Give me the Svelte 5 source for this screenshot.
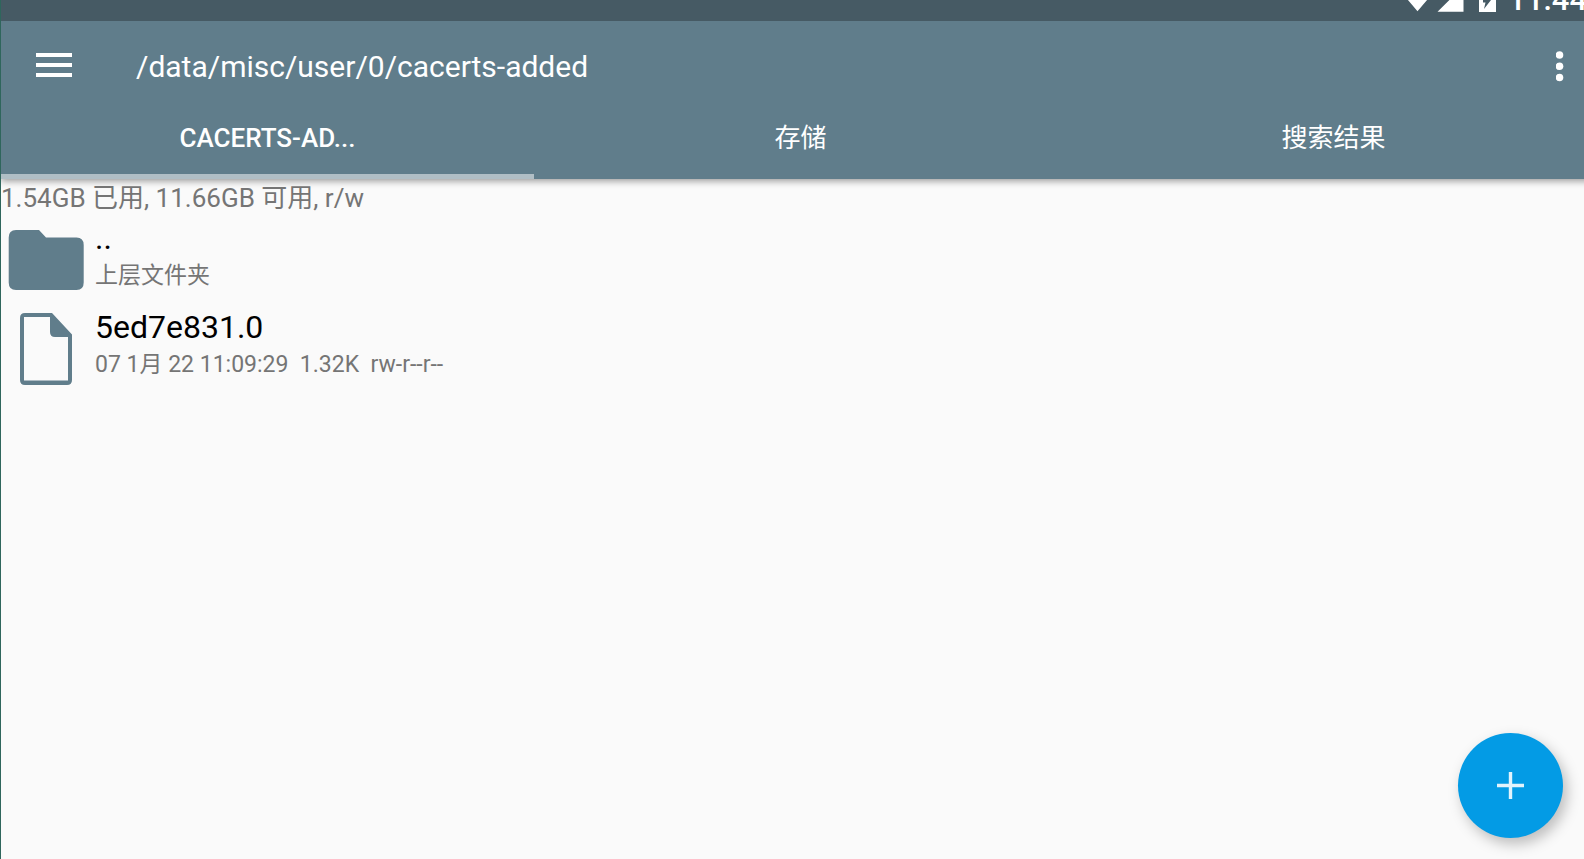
<script>
  const tabs = ['CACERTS-AD...', '存储', '搜索结果'];
  let active = $state(0);
</script>

<div class="window">
  <div class="screen">
    <header>
      <div class="status">
        <svg class="signals" viewBox="0 0 90 12" aria-hidden="true">
          <path fill="#fff" d="M-1.500 -10H34.500L16.500 11.300Z M36.500 11.800L62.500 -14V11.800Z M78 -12H95V12H78Z" />
          <path fill="#465a64" d="M83 9L84.500 2.500H82V-8H90V0Z" />
        </svg>
        <time>11:44</time>
      </div>
      <div class="toolbar">
        <button class="menu" aria-label="Menu">
          <svg width="36" height="26" viewBox="0 0 36 26"><path fill="#fff" d="M0 0h36v4H0zM0 10h36v4H0zM0 20h36v4H0z" /></svg>
        </button>
        <h1>/data/misc/user/0/cacerts-added</h1>
        <button class="more" aria-label="More options">
          <svg width="8" height="32" viewBox="0 0 8 32" fill="#fff"><circle cx="3.500" cy="5" r="3.800" /><circle cx="3.500" cy="16.300" r="3.800" /><circle cx="3.500" cy="27.500" r="3.800" /></svg>
        </button>
      </div>
      <nav>
        {#each tabs as tab, i}
          <button class="tab" class:active={active === i} onclick={() => (active = i)}>{tab}</button>
        {/each}
      </nav>
    </header>
    <main>
      <p class="usage">1.54GB 已用, 11.66GB 可用, r/w</p>
      <ul>
        <li class="parent">
          <svg class="folder" width="76" height="60" viewBox="0 0 76 60" aria-hidden="true">
            <path fill="#607d8b" d="M8 0H31L38 7.500H68.500Q75.700 7.500 75.700 15V52.500Q75.700 60 68.500 60H8Q.7 60 .7 52.500V7.500Q.7 0 8 0Z" />
          </svg>
          <div><span class="name">..</span><span class="detail">上层文件夹</span></div>
        </li>
        <li class="file">
          <svg width="52" height="72" viewBox="0 0 52 72" aria-hidden="true">
            <path fill="#607d8b" fill-rule="evenodd" d="M5 0H32L52 21.500V67Q52 72 47 72H5Q0 72 0 67V5Q0 0 5 0ZM4 4V67.500H48V24H35Q30 24 30 19V4Z" />
          </svg>
          <div><span class="name">5ed7e831.0</span><span class="detail">07 1月 22 11:09:29&nbsp; 1.32K&nbsp; rw-r--r--</span></div>
        </li>
      </ul>
    </main>
    <button class="fab" aria-label="Add">
      <svg width="27" height="27" viewBox="0 0 27 27"><path fill="#e1f3fc" d="M0 11.800h11.800V0h3.400v11.800H27v3.400H15.200V27h-3.400V15.200H0z" /></svg>
    </button>
  </div>
</div>

<style>
  :global(body) { margin: 0; }
  .window {
    box-sizing: border-box;
    min-height: 100vh;
    display: flex;
    overflow: hidden;
    border-left: 1px solid #2f665c;
    background: #fafafa;
    font-family: Roboto, "Noto Sans CJK SC", sans-serif;
  }
  .screen {
    position: relative;
    flex: 1;
    min-width: 0;
    margin-right: -16px;
  }
  button { padding: 0; border: 0; background: none; font: inherit; color: #fff; cursor: pointer; }
  svg { display: block; flex: none; }
  header { background: #607d8b; color: #fff; box-shadow: 0 2px 7px rgba(0, 0, 0, 0.4); }
  .status {
    display: flex;
    justify-content: flex-end;
    gap: 17px;
    height: 21px;
    padding-right: 13px;
    overflow: hidden;
    background: #465a64;
  }
  .signals { width: 90px; height: 12px; overflow: visible; }
  time { margin-top: -16px; font-size: 31px; line-height: 32px; font-weight: 500; }
  .toolbar { display: flex; align-items: center; height: 90px; padding: 0 36px 0 35px; }
  h1 { flex: 1; margin: 0 0 0 64px; padding-top: 1px; font-size: 30px; font-weight: 400; line-height: 36px; }
  nav { display: grid; grid-template-columns: repeat(3, 1fr); height: 68px; }
  .tab { padding-bottom: 10px; border-bottom: 5px solid transparent; font-size: 26px; line-height: 32px; }
  .active { border-color: #b0bec5; font-weight: 500; }
  .usage { margin: 0; padding-top: 3px; font-size: 26px; line-height: 32px; color: #757575; }
  ul { margin: 0; padding: 0; list-style: none; }
  li { display: flex; gap: 12px; padding-left: 7px; }
  .parent { gap: 11px; padding-top: 16px; padding-bottom: 23px; }
  .parent .folder { margin-bottom: 0; }
  .parent { height: 99px; box-sizing: border-box; }
  .parent div { margin-top: -6px; }
  .file { padding-left: 19px; gap: 23px; }
  .file div { margin-top: -4px; }
  .name, .detail { display: block; }
  .name { font-size: 32px; line-height: 36px; color: #000; }
  .detail { font-size: 23px; line-height: 40px; color: #757575; }
  .parent .name { line-height: 28px; }
  .parent .detail { padding-top: 4px; }
  .fab {
    position: absolute;
    right: 37px;
    bottom: 21px;
    display: grid;
    place-items: center;
    width: 105px;
    height: 105px;
    border-radius: 50%;
    background: #039be5;
    box-shadow: 4px 6px 14px rgba(0, 0, 0, 0.25);
  }
</style>
